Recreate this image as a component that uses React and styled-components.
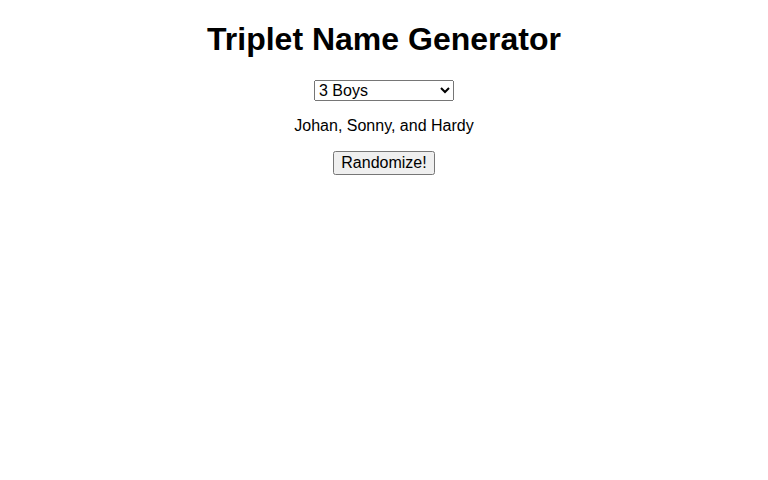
import React, { useState } from 'react';
import styled, { createGlobalStyle } from 'styled-components';

const GlobalStyle = createGlobalStyle`
  body {
    margin: 0;
    background: #ffffff;
    color: #000000;
    font-family: "Liberation Sans", Arial, sans-serif;
  }
`;

const names = {
  boys: ['Johan', 'Sonny', 'Hardy', 'Oscar', 'Felix', 'Milo', 'Jasper', 'Theo'],
  girls: ['Ella', 'Maya', 'Ruby', 'Clara', 'Ivy', 'Nora', 'Lena', 'Hazel'],
};

const Page = styled.div`
  padding: 0 8px;
  text-align: center;
`;

const Title = styled.h1`
  font-size: 2em;
  font-weight: bold;
  margin: 0.67em 0;
`;

const Picker = styled.select`
  width: 140px;
  height: 21px;
  font-family: "Liberation Sans", Arial, sans-serif;
  font-size: 16px;
`;

const Result = styled.p`
  margin: 16px 0;
  font-size: 16px;
`;

const Button = styled.button`
  font-family: "Liberation Sans", Arial, sans-serif;
  font-size: 16px;
`;

const pick = (list, n) => [...list].sort(() => Math.random() - 0.5).slice(0, n);

const App = () => {
  const [mode, setMode] = useState('3b');
  const [trio, setTrio] = useState(['Johan', 'Sonny', 'Hardy']);

  const randomize = () => {
    if (mode === '3b') setTrio(pick(names.boys, 3));
    else if (mode === '3g') setTrio(pick(names.girls, 3));
    else if (mode === '2b1g') setTrio([...pick(names.boys, 2), ...pick(names.girls, 1)]);
    else setTrio([...pick(names.girls, 2), ...pick(names.boys, 1)]);
  };

  return (
    <Page>
      <GlobalStyle />
      <Title>Triplet Name Generator</Title>
      <div>
        <Picker value={mode} onChange={(e) => setMode(e.target.value)}>
          <option value="3b">3 Boys</option>
          <option value="3g">3 Girls</option>
          <option value="2b1g">2 Boys, 1 Girl</option>
          <option value="2g1b">2 Girls, 1 Boy</option>
        </Picker>
      </div>
      <Result>{`${trio[0]}, ${trio[1]}, and ${trio[2]}`}</Result>
      <Button onClick={randomize}>Randomize!</Button>
    </Page>
  );
};

export default App;
